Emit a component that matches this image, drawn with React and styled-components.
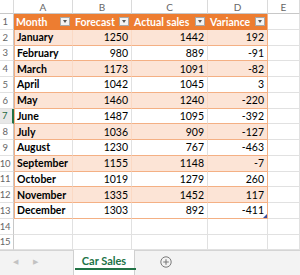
import React from "react";
import styled, { createGlobalStyle } from "styled-components";

const GlobalStyle = createGlobalStyle`
    * { box-sizing: border-box; }
    body {
        margin: 0;
        background: #fff;
        font-family: Lato, "Liberation Sans", sans-serif;
    }
`;

const Wrapper = styled.div`
    width: 300px;
    height: 275px;
    overflow: hidden;
    display: flex;
    flex-direction: column;
    background: #fff;
`;

const Sheet = styled.div`
    display: grid;
    grid-template-columns: 14px 59px 59px 76px 60px 1fr;
    grid-template-rows: 14px repeat(15, 15.75px);
    height: 250px;
`;

const ColHead = styled.div`
    display: flex;
    align-items: center;
    justify-content: center;
    font-size: 10px;
    color: #666;
    background: #fff;
    border-right: 1px solid #dadada;
    border-bottom: 1px solid #c8c8c8;
`;

const RowHead = styled.div`
    display: flex;
    align-items: center;
    justify-content: center;
    padding-right: 3px;
    overflow: hidden;
    font-size: 9.5px;
    letter-spacing: -0.3px;
    color: ${(p) => (p.active ? "#1e6b41" : "#666")};
    background: ${(p) => (p.active ? "#e8e8e8" : "#fff")};
    border-bottom: 1px solid #e1e1e1;
    border-right: ${(p) => (p.active ? "2px solid #217346" : "1px solid #c8c8c8")};
`;

const Cell = styled.div`
    position: relative;
    display: flex;
    align-items: center;
    justify-content: ${(p) => (p.num ? "flex-end" : "flex-start")};
    padding: ${(p) => (p.num ? "0 3px 0 0" : "0 0 0 2px")};
    font-size: 10.5px;
    font-weight: ${(p) => (p.bold ? 700 : 400)};
    color: #000;
    white-space: nowrap;
    overflow: hidden;
    background: ${(p) => (p.band ? "#fce4d6" : "#fff")};
    border-bottom: 1px solid ${(p) => (p.table ? "#f4b084" : "#e1e1e1")};
    border-right: 1px solid ${(p) => (p.edge ? "#f4b084" : p.band ? "#fbd9c4" : "#e1e1e1")};
    border-left: ${(p) => (p.first ? "1px solid #f4b084" : "none")};
`;

const HeadCell = styled.div`
    display: flex;
    align-items: center;
    justify-content: space-between;
    padding: 0 2px 0 2px;
    background: #ed7d31;
    color: #fff;
    font-size: 10.5px;
    font-weight: 700;
    white-space: nowrap;
    overflow: hidden;
    border-right: 1px solid ${(p) => (p.edge ? "#f4b084" : "#ed7d31")};
`;

const FilterBtn = styled.span`
    flex: none;
    width: 10px;
    height: 9px;
    display: flex;
    align-items: center;
    justify-content: center;
    background: #f3f3f3;
    border: 1px solid #a8a8a8;
    margin-left: 2px;
    &::after {
        content: "";
        border-left: 2.5px solid transparent;
        border-right: 2.5px solid transparent;
        border-top: 3px solid #555;
    }
`;

const Handle = styled.span`
    position: absolute;
    right: 0;
    bottom: 0;
    width: 0;
    height: 0;
    border-left: 4px solid transparent;
    border-bottom: 4px solid #3b4fa0;
`;

const TabBar = styled.div`
    flex: 1;
    display: flex;
    align-items: stretch;
    background: #f3f3f3;
    border-top: 1px solid #d4d4d4;
`;

const NavArrows = styled.div`
    width: 73px;
    display: flex;
    align-items: center;
    padding: 0 0 3px 13px;
    gap: 15px;
    color: #c2c2c2;
    font-size: 7px;
`;

const Tab = styled.div`
    width: 62px;
    margin-top: -1px;
    display: flex;
    align-items: center;
    justify-content: center;
    background: #fff;
    border-left: 1px solid #d0d0d0;
    border-right: 1px solid #d0d0d0;
    color: #217346;
    font-size: 11px;
    font-weight: 700;
    padding-bottom: 4px;
    position: relative;
    &::after {
        content: "";
        position: absolute;
        left: 1px;
        right: -2px;
        bottom: 5px;
        height: 2px;
        background: #217346;
    }
`;

const AddSheet = styled.div`
    display: flex;
    align-items: center;
    padding: 0 0 3px 25px;
`;

const months = [
    ["January", 1250, 1442, 192],
    ["February", 980, 889, -91],
    ["March", 1173, 1091, -82],
    ["April", 1042, 1045, 3],
    ["May", 1460, 1240, -220],
    ["June", 1487, 1095, -392],
    ["July", 1036, 909, -127],
    ["August", 1230, 767, -463],
    ["September", 1155, 1148, -7],
    ["October", 1019, 1279, 260],
    ["November", 1335, 1452, 117],
    ["December", 1303, 892, -411],
];

const headers = ["Month", "Forecast", "Actual sales", "Variance"];

export default function App() {
    return (
        <Wrapper>
            <GlobalStyle />
            <Sheet>
                <ColHead />
                {["A", "B", "C", "D", "E"].map((l) => (
                    <ColHead key={l}>{l}</ColHead>
                ))}

                <RowHead>1</RowHead>
                {headers.map((h, i) => (
                    <HeadCell key={h} edge={i === 3}>
                        {h}
                        <FilterBtn />
                    </HeadCell>
                ))}
                <Cell />

                {months.map((m, r) => {
                    const band = r % 2 === 0;
                    const last = r === months.length - 1;
                    return (
                        <React.Fragment key={m[0]}>
                            <RowHead active={r + 2 === 7}>{r + 2}</RowHead>
                            <Cell band={band} table bold first>{m[0]}</Cell>
                            <Cell band={band} table num>{m[1]}</Cell>
                            <Cell band={band} table num>{m[2]}</Cell>
                            <Cell band={band} table num edge>
                                {m[3]}
                                {last && <Handle />}
                            </Cell>
                            <Cell />
                        </React.Fragment>
                    );
                })}

                {[14, 15].map((n) => (
                    <React.Fragment key={n}>
                        <RowHead>{n}</RowHead>
                        <Cell />
                        <Cell />
                        <Cell />
                        <Cell />
                        <Cell />
                    </React.Fragment>
                ))}
            </Sheet>
            <TabBar>
                <NavArrows>
                    <span>◀</span>
                    <span>▶</span>
                </NavArrows>
                <Tab>Car Sales</Tab>
                <AddSheet>
                    <svg width="12" height="12" viewBox="0 0 12 12">
                        <circle cx="6" cy="6" r="5.2" fill="none" stroke="#7a7a7a" strokeWidth="1" />
                        <path d="M6 3.2v5.6M3.2 6h5.6" stroke="#7a7a7a" strokeWidth="1.1" />
                    </svg>
                </AddSheet>
            </TabBar>
        </Wrapper>
    );
}
